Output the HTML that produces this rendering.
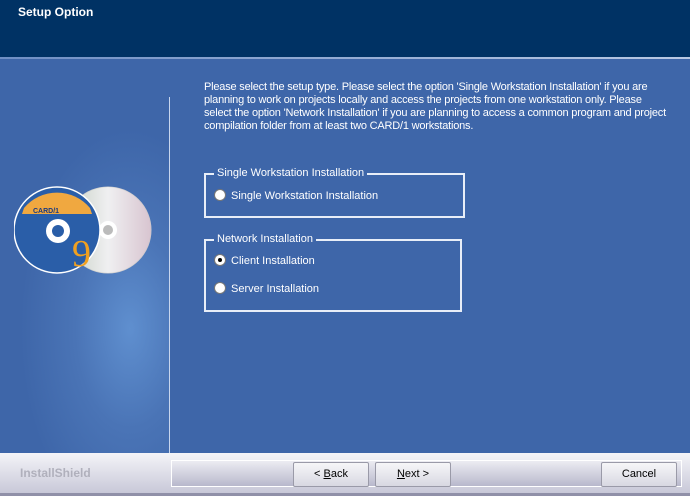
<!DOCTYPE html>
<html><head><style>
body{margin:0;width:690px;height:496px;overflow:hidden;font-family:"Liberation Sans",sans-serif;font-size:11px;position:relative;background:#3e66a9}
.hdr{position:absolute;left:0;top:0;width:690px;height:57px;background:#003264}
.hdr b{position:absolute;left:18px;top:5px;color:#fff;font-size:12px}
.line{position:absolute;top:57px;left:0;width:690px;height:2px;background:linear-gradient(90deg,#6f8fc4,#b9c9e4)}
.main{position:absolute;top:59px;left:0;width:690px;height:394px;background:#3e66a9}
.glow{position:absolute;top:59px;left:0;width:170px;height:394px;background:radial-gradient(ellipse 110px 200px at 130px 270px,#5f8fcf 0%,#4a74b6 50%,#3e66a9 100%)}
.vl{position:absolute;left:169px;top:97px;width:1px;height:356px;background:#c8d6ee}
.txt{position:absolute;left:204px;top:81px;color:#fff;line-height:13px;letter-spacing:-0.2px;white-space:nowrap}
.box{position:absolute;border:2px solid #e8eef8;box-sizing:border-box}
.lg{position:absolute;top:-8px;left:8px;background:#3e66a9;color:#fff;padding:0 3px}
.opt{position:absolute;left:8px;color:#fff}
.rd{display:inline-block;width:12px;height:12px;border-radius:50%;background:#fff;border:1px solid #777;vertical-align:-2px;margin-right:5px;position:relative;box-sizing:border-box}
.rd.on:after{content:"";position:absolute;left:3px;top:3px;width:4px;height:4px;border-radius:50%;background:#000}
.ftr{position:absolute;top:453px;left:0;width:690px;height:40px;background:linear-gradient(#f4f4f8,#c8c8d8)}
.bot{position:absolute;top:493px;left:0;width:690px;height:3px;background:#9090a8}
.bar{position:absolute;left:171px;top:460px;width:511px;height:27px;border:1px solid #fff;box-sizing:border-box;background:linear-gradient(#ececf2,#b8b8cc)}
.btn{position:absolute;top:462px;height:25px;width:76px;background:linear-gradient(#f6f6f8,#d8d8e2);border:1px solid #9a9aa8;border-radius:2px;box-sizing:border-box;text-align:center;line-height:23px;font-size:11px;color:#000}
.is{position:absolute;left:20px;top:466px;color:#b0b0bc;font-size:12px;font-weight:bold}
</style></head><body>
<div class="hdr"><b>Setup Option</b></div>
<div class="line"></div>
<div class="main"></div>
<div class="glow"></div>
<div class="vl"></div>
<svg style="position:absolute;left:14px;top:186px" width="140" height="90">
<defs><linearGradient id="g" x1="0" x2="1"><stop offset="0" stop-color="#b8c8b0"/><stop offset=".5" stop-color="#fff"/><stop offset="1" stop-color="#d8b8c8"/></linearGradient></defs>
<circle cx="94" cy="44" r="43" fill="#d8d8dc" stroke="#ccc"/>
<circle cx="94" cy="44" r="43" fill="url(#g)" opacity=".6"/>
<circle cx="94" cy="44" r="9" fill="#fff"/><circle cx="94" cy="44" r="5" fill="#bbb"/>
<circle cx="43" cy="44" r="43" fill="#2a5ea8" stroke="#fff" stroke-width="1.5"/>
<path d="M10 22 A43 43 0 0 1 76 22 L78 28 L8 28 Z" fill="#f0a840"/>
<text x="19" y="27" font-size="7" font-weight="bold" fill="#1a3a80" font-family="Liberation Sans">CARD/1</text>
<circle cx="44" cy="45" r="12" fill="#fff"/><circle cx="44" cy="45" r="6" fill="#2a5ea8"/>
<text x="58" y="80" font-size="38" fill="#f0a020" font-family="Liberation Serif">9</text>
</svg>
<div class="txt">Please select the setup type. Please select the option 'Single Workstation Installation' if you are<br>planning to work on projects locally and access the projects from one workstation only. Please<br>select the option 'Network Installation' if you are planning to access a common program and project<br>compilation folder from at least two CARD/1 workstations.</div>
<div class="box" style="left:204px;top:173px;width:261px;height:45px"><span class="lg">Single Workstation Installation</span><div class="opt" style="top:14px"><span class="rd"></span>Single Workstation Installation</div></div>
<div class="box" style="left:204px;top:239px;width:258px;height:73px"><span class="lg">Network Installation</span><div class="opt" style="top:13px"><span class="rd on"></span>Client Installation</div><div class="opt" style="top:41px"><span class="rd"></span>Server Installation</div></div>
<div class="ftr"></div><div class="bot"></div>
<div class="is">InstallShield</div>
<div class="bar"></div>
<div class="btn" style="left:293px">&lt; <u>B</u>ack</div>
<div class="btn" style="left:375px"><u>N</u>ext &gt;</div>
<div class="btn" style="left:601px">Cancel</div>
</body></html>
